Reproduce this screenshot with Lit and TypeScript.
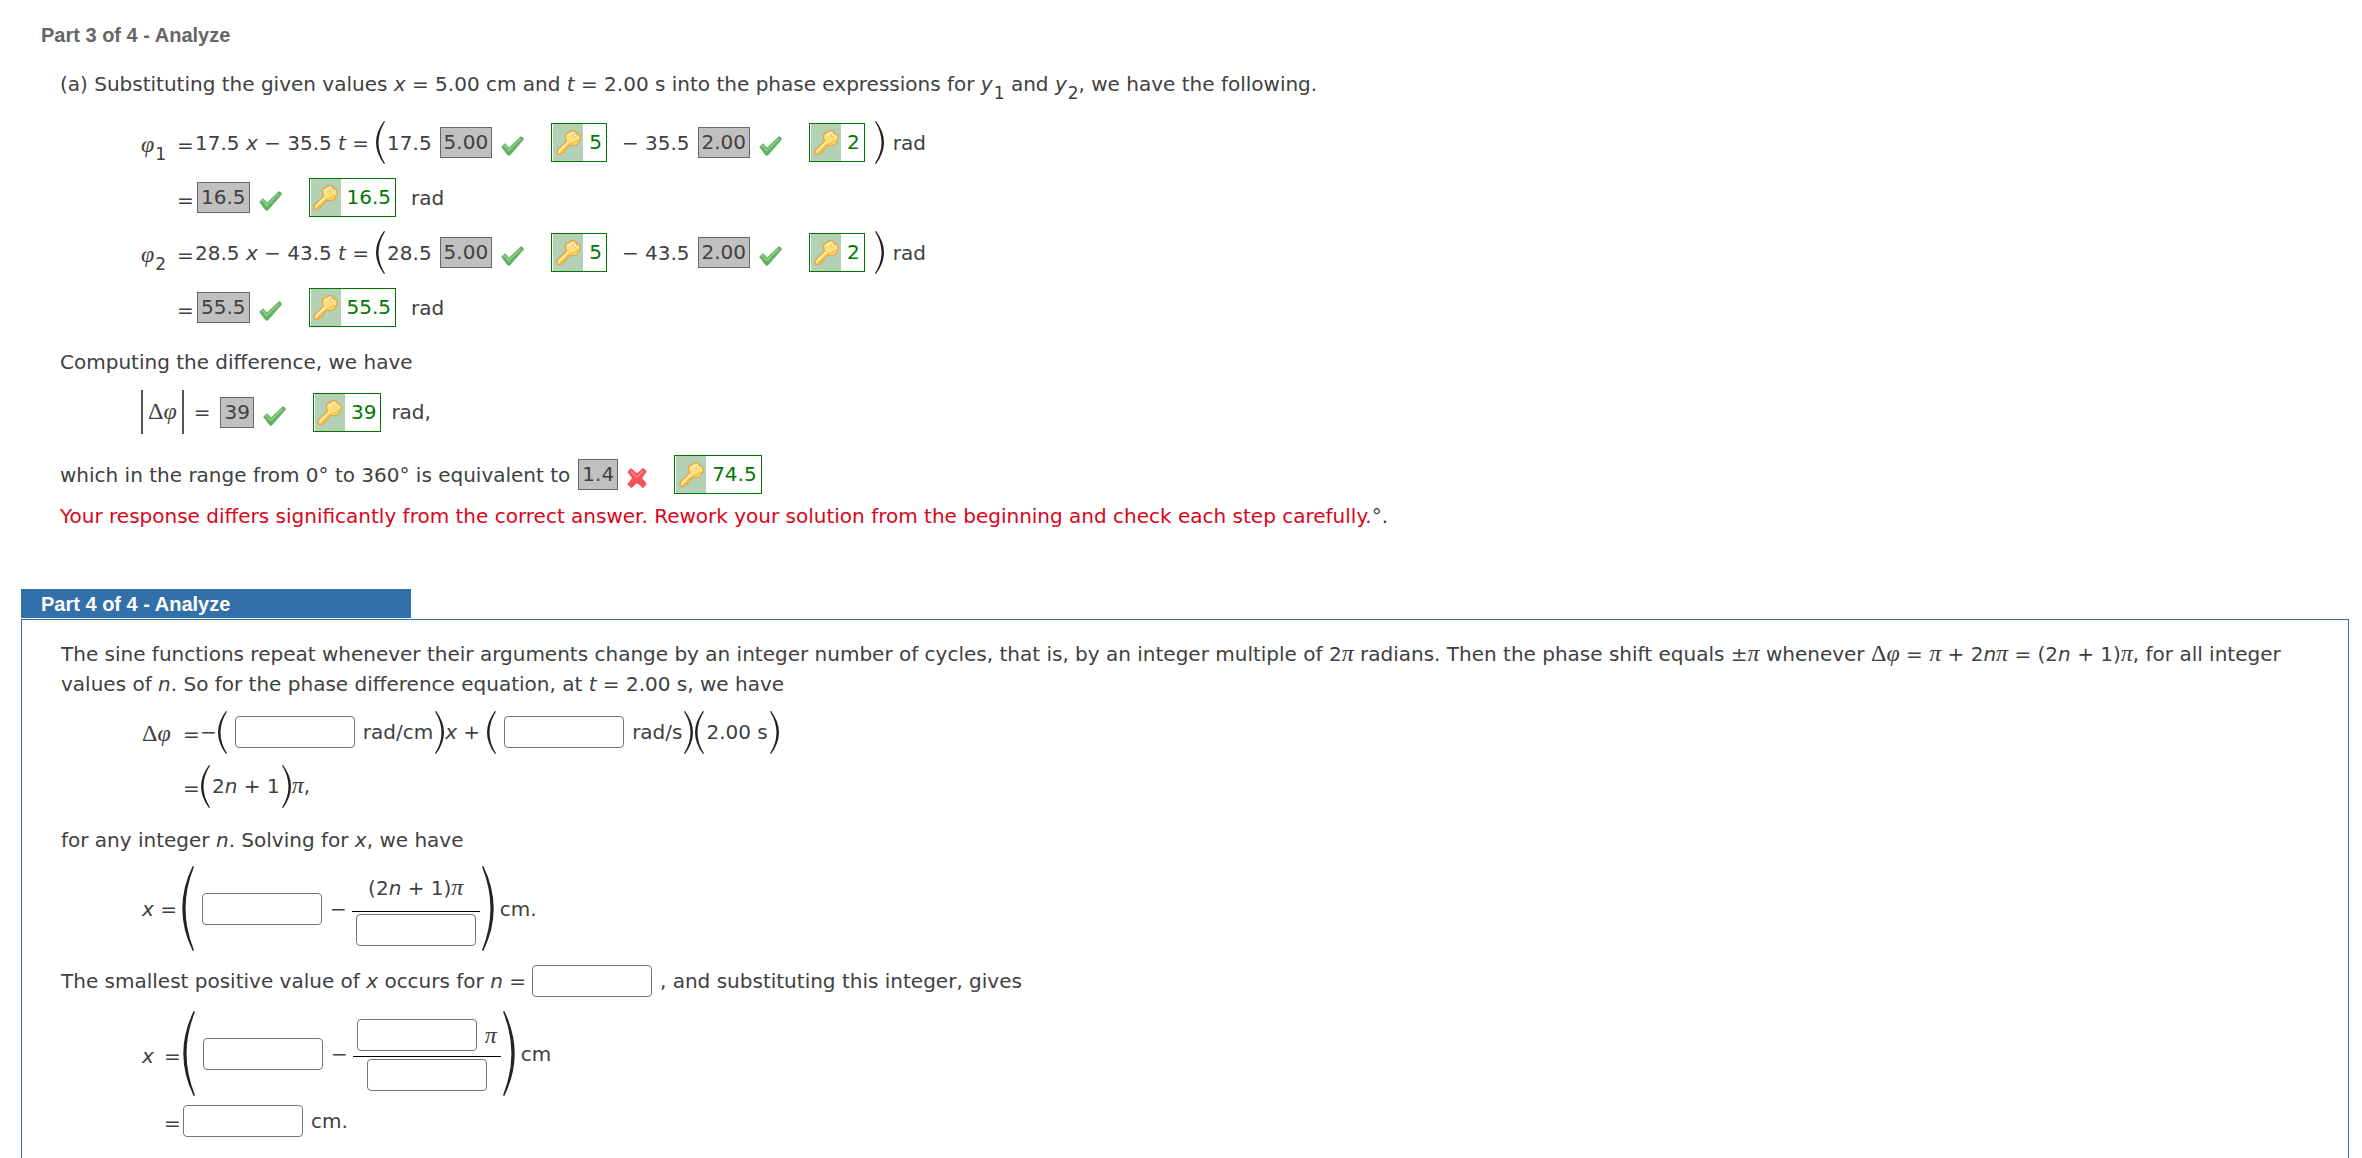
import { LitElement, html, css, svg } from "lit";
import { classMap } from "lit/directives/class-map.js";

const checkIcon = html`<svg class="mark" width="23" height="20" viewBox="0 0 66 57" role="img" aria-label="correct">
  <path d="M2 31L10 23Q13 22 16 26L23 34L56 3Q59 1 62 4L65 9L27 53Q22 58 18 53Z" fill="#62b262" stroke="#57a457" stroke-width="2" />
  <path d="M7 29L11 27L22 41L57 8" fill="none" stroke="#8acb89" stroke-width="5" />
</svg>`;

const crossIcon = html`<svg class="mark" width="20" height="20" viewBox="0 0 60 60" role="img" aria-label="incorrect">
  <path d="M4 12L12 3L30 19L48 2L57 10L43 30L57 48L48 58L30 43L13 58L3 49L18 30Z" fill="#f4545c" stroke="#f4545c" stroke-width="4" stroke-linejoin="round" />
  <path d="M11 10L30 27L49 9" fill="none" stroke="#fb8085" stroke-width="5" />
</svg>`;

const keyIcon = html`<svg width="25" height="25" viewBox="0 0 75 75" aria-hidden="true">
  <path d="M29 14Q31 8 39 8Q43 1 52 2Q60 2 62 10Q73 13 73 23Q73 30 68 33Q67 45 55 46Q47 48 42 45L33 54Q34 59 27 60L25 66L19 67L17 72L7 73Q2 73 3 66L5 59L32 33Q26 24 29 14Z"
    fill="#fbdf78" stroke="#e0a548" stroke-width="4" stroke-linejoin="round" />
  <path d="M9 63L36 37" stroke="#fff2b8" stroke-width="4" fill="none" />
  <path d="M37 17Q44 8 54 10Q62 16 64 24" stroke="#fff2b8" stroke-width="5" fill="none" />
  <path d="M13 68L39 43Q55 41 64 30" stroke="#f0bf42" stroke-width="4" fill="none" />
  <circle cx="57" cy="16" r="5" fill="#fffbe8" stroke="#e0a548" stroke-width="2" />
</svg>`;

const fence = (side: "open" | "close", tall = false) => {
  const open = side === "open";
  const shape = open
    ? svg`<path d="M9 0Q-7 50 9 100L10 99Q-3 50 10 1Z" />`
    : svg`<path d="M1 0Q17 50 1 100L0 99Q13 50 0 1Z" />`;
  return html`<svg class=${classMap({ fence: true, open, close: !open, tall })} viewBox="0 0 10 100"
    preserveAspectRatio="none" role="img" aria-label=${open ? "(" : ")"}>${shape}</svg>`;
};

const answer = (given: string, ok: boolean, key: string) => html`<span class="answer"
  ><span class="given">${given}</span>${ok ? checkIcon : crossIcon}<span class="key"
    ><span class="key-icon">${keyIcon}</span><span class="key-text">${key}</span></span></span>`;

const blank = (label: string) => html`<input type="text" aria-label=${label} />`;

const PI = html`<i class="sym">π</i>`;
const DPHI = html`<span class="sym">Δ<i>φ</i></span>`;

interface Phase {
  index: number;
  k: string;
  w: string;
  result: string;
}

const PHASES: Phase[] = [
  { index: 1, k: "17.5", w: "35.5", result: "16.5" },
  { index: 2, k: "28.5", w: "43.5", result: "55.5" },
];

class AppRoot extends LitElement {
  static styles = css`
    :host {
      display: flex;
      flex-direction: column;
      box-sizing: border-box;
      min-height: 100vh;
      padding: 20px 13px 0 21px;
      background: #fff;
      color: #404040;
      font: 20px/30px Verdana, "DejaVu Sans", sans-serif;
    }
    h2 {
      margin: 0;
      padding-left: 20px;
      font: bold 20px/30px Arial, "Liberation Sans", sans-serif;
      color: #666;
    }
    p { margin: 0; }
    .done { padding: 19px 39px 58px; }
    .tab {
      width: 370px;
      padding-top: 1px;
      margin-bottom: 1px;
      line-height: 28px;
      color: #fff;
      background: #336fa8;
    }
    .panel {
      flex: 1;
      padding: 19px 39px 20px;
      border: 1px solid #336fa8;
      border-bottom: 0;
    }
    .sym {
      font-family: "Times New Roman", "Liberation Serif", serif;
      font-size: 24px;
      line-height: 0;
    }
    sub {
      font-size: 17px;
      line-height: 0;
      vertical-align: -8px;
      margin-left: 1px;
    }
    .row {
      display: flex;
      align-items: center;
      white-space: nowrap;
    }
    .eqs {
      display: grid;
      grid-template-columns: 36px 18px auto;
      grid-auto-rows: 55px;
      align-items: center;
      justify-content: start;
      padding-left: 81px;
      white-space: nowrap;
    }
    .eqs > span, .eqs > i { padding-top: 4px; }
    .eqs.wide {
      grid-template-columns: 41px 17px auto;
      grid-auto-rows: 54px;
      margin-top: 6px;
    }
    .eqs.slim {
      grid-template-columns: 22px 18px auto;
      grid-auto-rows: auto;
      row-gap: 8px;
    }
    .indent { padding-left: 81px; }
    .block { margin-top: 12px; }
    .phases { margin: 16px 0 12px; }
    .abs {
      padding: 0 5px;
      border: solid #555;
      border-width: 0 2px;
      line-height: 44px;
    }
    .abs-row { gap: 10px; margin: 13px 0 21px; }
    .final { gap: 8px; margin-bottom: 7px; }
    .error { color: #d9051a; }
    .error span { color: #404040; }

    .answer { display: inline-flex; align-items: center; }
    .result { padding-left: 2px; }
    .given {
      padding: 0 3px;
      border: 1px solid #666;
      background: #c0c0c0;
      line-height: 29px;
    }
    .mark { margin: 7px 27px 0 9px; }
    .key {
      display: inline-flex;
      border: 1px solid #007800;
      padding-left: 1px;
      color: #007800;
      line-height: 37px;
    }
    .key-icon {
      display: flex;
      align-items: center;
      justify-content: center;
      width: 30px;
      background: #b5d1b5;
    }
    .key-text { padding: 0 4px 0 6px; }

    .fence { width: 10px; height: 43px; fill: #222; flex: none; }
    .fence.open { margin: 0 2px 0 6px; }
    .fence.close { margin: 0 0 0 2px; }
    .fence.tall { width: 13px; height: 85px; }
    .fence.open.tall { margin-left: 4px; }
    .row > .fence.open:first-child { margin-left: 0; }
    .sp { margin-left: 8px; }
    .sp-s { margin-left: 5px; }
    .sp-l { margin: 0 8px 0 15px; }

    input {
      box-sizing: border-box;
      width: 120px;
      height: 32px;
      margin: 0 8px 0 6px;
      padding: 1px 4px;
      border: 1px solid #767676;
      border-radius: 4px;
      background: #fff;
      color: #404040;
      font: inherit;
    }
    .row > input:first-child { margin-left: 1px; }
    .frac {
      display: inline-flex;
      flex-direction: column;
      align-items: center;
      margin-left: 5px;
      padding-top: 3px;
    }
    .frac input { margin: 0 4px; }
    .num { display: flex; align-items: center; min-height: 32px; padding-bottom: 5px; }
    .num > .sym { padding: 0 4px; }
    .num.text { padding: 0 14px; min-height: 37px; line-height: 28px; align-items: flex-start; }
    .den {
      display: flex;
      align-self: stretch;
      justify-content: center;
      padding-top: 2px;
      border-top: 1px solid #000;
    }
    .solve { margin: 11px 0 14px; }
    .smallest { margin-bottom: 14px; }
  `;

  private phase(p: Phase) {
    return html`
      <span><i class="sym">φ</i><sub>${p.index}</sub></span><span>=</span>
      <div class="row">
        <span>${p.k} <i>x</i> − ${p.w} <i>t</i> =</span>
        ${fence("open")}<span>${p.k}</span><span class="sp">${answer("5.00", true, "5")}</span>
        <span class="sp-l">− ${p.w}</span>${answer("2.00", true, "2")}
        <span class="sp"></span>${fence("close")}<span class="sp">rad</span>
      </div>
      <span></span><span>=</span>
      <div class="row result">${answer(p.result, true, p.result)}<span class="sp-l">rad</span></div>
    `;
  }

  render() {
    return html`
      <h2>Part 3 of 4 - Analyze</h2>
      <section class="done">
        <p>(a) Substituting the given values <i>x</i> = 5.00 cm and <i>t</i> = 2.00 s into the phase expressions for <i>y</i><sub>1</sub> and <i>y</i><sub>2</sub>, we have the following.</p>
        <div class="eqs phases">${PHASES.map((p) => this.phase(p))}</div>
        <p>Computing the difference, we have</p>
        <div class="row indent abs-row">
          <span class="abs">${DPHI}</span><span>=</span>${answer("39", true, "39")}<span>rad,</span>
        </div>
        <div class="row final"><span>which in the range from 0° to 360° is equivalent to</span>${answer("1.4", false, "74.5")}</div>
        <p class="error">Your response differs significantly from the correct answer. Rework your solution from the beginning and check each step carefully.<span>°.</span></p>
      </section>

      <h2 class="tab">Part 4 of 4 - Analyze</h2>
      <section class="panel">
        <p>The sine functions repeat whenever their arguments change by an integer number of cycles, that is, by an integer multiple of 2${PI} radians. Then the phase shift equals ±${PI} whenever ${DPHI} = ${PI} + 2<i>n</i>${PI} = (2<i>n</i> + 1)${PI}, for all integer values of <i>n</i>. So for the phase difference equation, at <i>t</i> = 2.00 s, we have</p>
        <div class="eqs wide">
          <span>${DPHI}</span><span>=</span>
          <div class="row">
            <span>−</span><span class="row">${fence("open")}</span>${blank("Coefficient of x in rad/cm")}<span>rad/cm</span>${fence("close")}
            <span><i>x</i> +</span>${fence("open")}${blank("Coefficient of time in rad/s")}<span>rad/s</span>${fence("close")}
            <span class="row">${fence("open")}</span><span>2.00 s</span>${fence("close")}
          </div>
          <span></span><span>=</span>
          <div class="row">${fence("open")}<span>2<i>n</i> + 1</span>${fence("close")}<span>${PI},</span></div>
        </div>
        <p class="block">for any integer <i>n</i>. Solving for <i>x</i>, we have</p>
        <div class="row indent solve">
          <span><i>x</i> =</span>${fence("open", true)}${blank("Constant term")}<span>−</span>
          <span class="frac">
            <span class="num text"><span>(2<i>n</i> + 1)${PI}</span></span>
            <span class="den">${blank("Denominator")}</span>
          </span>
          ${fence("close", true)}<span class="sp-s">cm.</span>
        </div>
        <div class="row smallest">
          <label for="n">The smallest positive value of <i>x</i> occurs for <i>n</i> =</label><input id="n" type="text" /><span>, and substituting this integer, gives</span>
        </div>
        <div class="eqs slim">
          <i>x</i><span>=</span>
          <div class="row">
            ${fence("open", true)}${blank("Constant term")}<span>−</span>
            <span class="frac">
              <span class="num">${blank("Multiple of pi")}${PI}</span>
              <span class="den">${blank("Denominator")}</span>
            </span>
            ${fence("close", true)}<span class="sp-s">cm</span>
          </div>
          <span></span><span>=</span>
          <div class="row">${blank("Value of x in cm")}<span>cm.</span></div>
        </div>
      </section>
    `;
  }
}

customElements.define("app-root", AppRoot);
